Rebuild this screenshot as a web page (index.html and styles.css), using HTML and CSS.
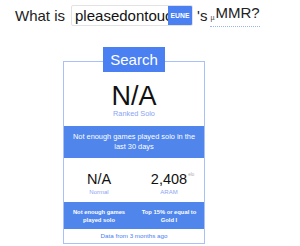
FILE: index.html
```html
<!DOCTYPE html>
<html>
<head>
<meta charset="utf-8">
<link rel="stylesheet" href="styles.css">
</head>
<body>
<div class="page">
  <div class="query">
    <span class="q-text">What is</span>
    <div class="name-box"><span class="name">pleasedontouch</span><span class="region">EUNE</span></div>
    <span class="q-text">'s</span>
    <span class="mmr"><span class="mu">µ</span>MMR?</span>
  </div>
  <div class="result">
    <button class="search">Search</button>
    <div class="card">
      <div class="main-stat">
        <div class="big">N/A</div>
        <div class="label">Ranked Solo</div>
      </div>
      <div class="band band-lg">Not enough games played solo in the last 30 days</div>
      <div class="stats">
        <div class="stat"><div class="val">N/A</div><div class="label sm">Normal</div></div>
        <div class="stat"><div class="val">2,408<span class="elo">elo</span></div><div class="label sm">ARAM</div></div>
      </div>
      <div class="band band-sm">
        <div class="col">Not enough games played solo</div>
        <div class="col">Top 15% or equal to Gold I</div>
      </div>
      <div class="footer">Data from 3 months ago</div>
    </div>
  </div>
</div>
</body>
</html>
```

FILE: styles.css
```css
* { box-sizing: border-box; }
html, body { margin: 0; padding: 0; background: #fff; }
body { font-family: "Liberation Sans", Arial, sans-serif; color: #222; }
.page { padding: 5px 0 0 15px; }

.query { display: flex; align-items: center; height: 21px; font-size: 15px; }
.q-text { line-height: 21px; }
.name-box {
  display: flex; align-items: stretch;
  width: 122px; height: 21px;
  margin: 0 4px 0 6px;
  border: 1px solid #e2e2e2; border-radius: 2px;
  overflow: hidden;
}
.name { flex: 1; overflow: hidden; white-space: nowrap; padding-left: 3px; line-height: 19px; color: #111; }
.region {
  width: 24px; background: #4a80f2; color: #fff;
  font-size: 6.8px; font-weight: bold; line-height: 19px; text-align: center;
}
.mmr { margin-left: 3px; line-height: 17px; border-bottom: 1px dotted #9ab3f5; }
.mu { font-size: 7px; vertical-align: -2px; margin-right: 1px; color: #444; }

.result { width: 142px; margin: 21px 0 0 48px; display: flex; flex-direction: column; align-items: center; }
.search {
  position: relative;
  height: 25px; padding: 0 7px; margin: 0;
  border: 0; border-radius: 0;
  background: #4a80f2; color: #fff;
  font-family: inherit; font-size: 15px; line-height: 25px;
}
.card { width: 142px; margin-top: -11px; border: 1px solid #a9c1fb; text-align: center; }
.main-stat { padding-top: 21px; padding-bottom: 7px; }
.big { font-size: 27px; line-height: 26px; color: #111; }
.label { font-size: 7.3px; line-height: 10px; color: #8aa4f3; }
.band { background: #5086ec; color: #fff; }
.band-lg { font-size: 7.4px; line-height: 10px; padding: 6px 8px; }
.stats { display: flex; padding: 12px 0 6px; }
.stat { flex: 1; }
.val { position: relative; display: inline-block; font-size: 14.5px; line-height: 16px; color: #111; }
.elo { position: absolute; left: 100%; top: 1px; margin-left: 1px; font-size: 4.5px; line-height: 5px; color: #aaa; }
.label.sm { font-size: 6px; line-height: 8px; }
.band-sm { display: flex; padding: 6px 0 5px; font-size: 5.8px; font-weight: bold; line-height: 8px; }
.col { flex: 1; padding: 0 6px; }
.footer { font-size: 6.25px; line-height: 14px; color: #4a7ff0; }
```
